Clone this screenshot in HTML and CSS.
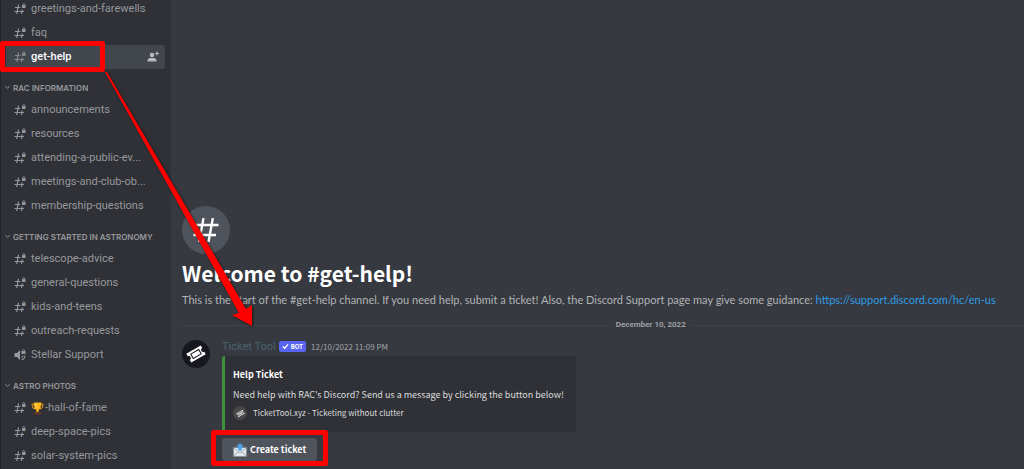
FILE: index.html
```html
<!DOCTYPE html>
<html lang="en">
<head>
<meta charset="utf-8">
<title>get-help</title>
<link rel="stylesheet" href="styles.css">
</head>
<body>
<svg class="defs" aria-hidden="true">
  <symbol id="hash" viewBox="0 0 24 24">
    <path d="M2 9h11M1 17h19M9 3 5.500 22M16.500 13 15 22" fill="none" stroke="currentColor" stroke-width="2.400"/>
    <rect x="16" y="4" width="7" height="6" rx="1" fill="currentColor"/><path d="M17.500 5V3a2 2 0 0 1 4 0v2" fill="none" stroke="currentColor" stroke-width="1.500"/>
  </symbol>
  <symbol id="chevron" viewBox="0 0 8 8"><path d="m1.500 2.500 2.500 2.500 2.500-2.500" fill="none" stroke="currentColor" stroke-width="1"/></symbol>
  <symbol id="ticket" viewBox="0 0 24 24">
    <g transform="rotate(-30 12 12)"><path fill="currentColor" d="M2 6h20v3.500a2.500 2.500 0 0 0 0 5V18H2v-3.500a2.500 2.500 0 0 0 0-5z"/><path d="M6.500 9h11v6h-11z" fill="none" stroke="#17171f" stroke-width="1.200"/></g>
  </symbol>
</svg>
<div class="app">
  <nav class="sidebar" aria-label="Channels">
    <ul class="channels">
      <li><a class="channel" href="#"><svg class="icon"><use href="#hash"/></svg><span class="name">greetings-and-farewells</span></a></li>
      <li><a class="channel" href="#"><svg class="icon"><use href="#hash"/></svg><span class="name">faq</span></a></li>
      <li><a class="channel selected" href="#" aria-current="page"><svg class="icon"><use href="#hash"/></svg><span class="name">get-help</span>
        <svg class="invite" viewBox="0 0 24 24" fill="currentColor"><circle cx="10" cy="8" r="4.500"/><path d="M1 21v-2c0-4 4-5 9-5s9 1 9 5v2zM19 1h2v3h3v2h-3v3h-2V6h-3V4h3z"/></svg></a></li>
    </ul>
    <h2 class="category"><svg class="chevron"><use href="#chevron"/></svg>RAC INFORMATION</h2>
    <ul class="channels">
      <li><a class="channel" href="#"><svg class="icon"><use href="#hash"/></svg><span class="name">announcements</span></a></li>
      <li><a class="channel" href="#"><svg class="icon"><use href="#hash"/></svg><span class="name">resources</span></a></li>
      <li><a class="channel" href="#"><svg class="icon"><use href="#hash"/></svg><span class="name">attending-a-public-ev...</span></a></li>
      <li><a class="channel" href="#"><svg class="icon"><use href="#hash"/></svg><span class="name">meetings-and-club-ob...</span></a></li>
      <li><a class="channel" href="#"><svg class="icon"><use href="#hash"/></svg><span class="name">membership-questions</span></a></li>
    </ul>
    <h2 class="category"><svg class="chevron"><use href="#chevron"/></svg>GETTING STARTED IN ASTRONOMY</h2>
    <ul class="channels">
      <li><a class="channel" href="#"><svg class="icon"><use href="#hash"/></svg><span class="name">telescope-advice</span></a></li>
      <li><a class="channel" href="#"><svg class="icon"><use href="#hash"/></svg><span class="name">general-questions</span></a></li>
      <li><a class="channel" href="#"><svg class="icon"><use href="#hash"/></svg><span class="name">kids-and-teens</span></a></li>
      <li><a class="channel" href="#"><svg class="icon"><use href="#hash"/></svg><span class="name">outreach-requests</span></a></li>
      <li><a class="channel" href="#"><svg class="icon" viewBox="0 0 24 24"><path fill="currentColor" d="M12 2v20l-6-6H1V8h5z"/><path d="M15 17a5 5 0 0 0 3-4M15 21.500a9 9 0 0 0 7-8.500" fill="none" stroke="currentColor" stroke-width="2.200"/><rect x="15" y="4" width="8" height="6" rx="1" fill="currentColor"/><path d="M17 5V3a2 2 0 0 1 4 0v2" fill="none" stroke="currentColor" stroke-width="1.500"/></svg><span class="name">Stellar Support</span></a></li>
    </ul>
    <h2 class="category"><svg class="chevron"><use href="#chevron"/></svg>ASTRO PHOTOS</h2>
    <ul class="channels">
      <li><a class="channel" href="#"><svg class="icon"><use href="#hash"/></svg><span class="name"><svg class="trophy" viewBox="0 0 24 24" role="img" aria-label="trophy"><path d="M6 4H2c0 5 2 8 6 9M18 4h4c0 5-2 8-6 9" fill="none" stroke="#e89b12" stroke-width="2"/><path d="M5 1h14c0 8-2 12-5 14v4h-4v-4C7 13 5 9 5 1z" fill="#ffb61c"/><path d="M8 3h2c0 5 0 7 1 9-2-1-3-5-3-9z" fill="#ffe08a"/><path d="M5 19h14v4H5z" fill="#6b3524"/></svg>-hall-of-fame</span></a></li>
      <li><a class="channel" href="#"><svg class="icon"><use href="#hash"/></svg><span class="name">deep-space-pics</span></a></li>
      <li><a class="channel" href="#"><svg class="icon"><use href="#hash"/></svg><span class="name">solar-system-pics</span></a></li>
    </ul>
  </nav>
  <main class="chat">
    <div class="hero"><svg viewBox="0 0 24 24"><path d="M4 8h18M2 16h18M10 2.500 6.500 21.500M17.500 2.500 14 21.500" fill="none" stroke="currentColor" stroke-width="1.900"/></svg></div>
    <h1 class="title">Welcome to #get-help!</h1>
    <p class="intro">This is the start of the #get-help channel. If you need help, submit a ticket! Also, the Discord Support page may give some guidance: <a href="https://support.discord.com/hc/en-us">https://support.discord.com/hc/en-us</a></p>
    <div class="divider"><span>December 10, 2022</span></div>
    <article class="message">
      <div class="avatar"><svg><use href="#ticket"/></svg></div>
      <div class="body">
        <header class="meta"><span class="author">Ticket Tool</span><span class="bot"><svg viewBox="0 0 8 8"><path d="m1 4 2 2 4-4.500" fill="none" stroke="currentColor" stroke-width="1.400"/></svg>BOT</span><time>12/10/2022 11:09 PM</time></header>
        <section class="embed">
          <h3>Help Ticket</h3>
          <p>Need help with RAC's Discord? Send us a message by clicking the button below!</p>
          <footer><span class="mini"><svg><use href="#ticket"/></svg></span>TicketTool.xyz - Ticketing without clutter</footer>
        </section>
        <button class="create" type="button"><svg viewBox="0 0 24 24"><path fill="#dce6ec" d="M1 8h22v15H1z"/><path d="m1 8 11 9L23 8M1 23l8-8M23 23l-8-8" fill="none" stroke="#9aabb6" stroke-width="1.500"/><path fill="#4ba3e8" d="M9 13V6H5l7-6 7 6h-4v7z"/></svg>Create ticket</button>
      </div>
    </article>
  </main>
</div>
<svg class="markup" width="350" height="469" viewBox="0 0 350 469" aria-hidden="true">
  <g fill="none" stroke="#fe0000" stroke-width="5" stroke-linejoin="round"><rect x="2.500" y="43.500" width="100" height="26"/><rect x="213.500" y="432.500" width="112" height="31"/></g>
  <path class="arrow" fill="#fe0000" d="M105 72 107 72 246 309 252 305V326L232 315 239 313z"/>
</svg>
</body>
</html>
```
FILE: styles.css
```css
* { box-sizing: border-box; }
body { margin: 0; background: #36393f; color: #dcddde; font: 9px/18px "Noto Sans CJK SC", "Noto Sans", sans-serif; overflow: hidden; }
h1, h2, h3, p, ul { margin: 0; padding: 0; }
ul { list-style: none; }
svg { display: block; flex: none; }
.defs { position: absolute; width: 0; height: 0; }
.app { display: flex; height: 100vh; overflow: hidden; }
.sidebar { flex: none; width: 171px; background: #2f3136; border-left: 1px solid #232428; padding: 0 6px 0 5px; margin-top: -3px; color: #96989d; }
.channel { display: flex; align-items: center; height: 24px; padding: 0 6px 0 8px; border-radius: 3px; color: inherit; font: 11px/18px Roboto, sans-serif; text-decoration: none; }
.icon { width: 12px; height: 12px; margin-right: 5px; }
.name { display: flex; align-items: center; white-space: nowrap; }
.selected { background: #42464d; }
.selected .name { color: #fff; font-weight: 500; }
.selected .icon { color: #85888d; }
.invite { width: 12px; height: 12px; margin-left: auto; color: #b9bbbe; }
.category { display: flex; align-items: center; height: 29px; padding-top: 8px; font: 600 8px/16px Inter, sans-serif; white-space: nowrap; }
.chevron { width: 7px; height: 7px; margin-left: -2px; margin-right: 2px; }
.trophy { width: 13px; height: 13px; margin-right: 1px; }
.chat { flex: 1; min-width: 0; display: flex; flex-direction: column; justify-content: flex-end; padding: 0 0 8px 11px; }
.hero { width: 48px; height: 48px; border-radius: 50%; background: #4f545c; color: #fff; display: grid; place-items: center; }
.hero svg { width: 30px; height: 30px; }
.title { margin-top: 5px; color: #fff; font-size: 21px; line-height: 28px; }
.intro { margin-top: 4px; color: #b1b3b7; font: 11px/18px Lato, sans-serif; white-space: nowrap; }
.intro a { color: #2e9ce6; text-decoration: none; }
.divider { display: flex; align-items: center; gap: 4px; margin-top: 7px; font: 600 8px/18px Roboto, sans-serif; color: #a3a6aa; }
.divider::before, .divider::after { content: ""; flex: 7; height: 1px; background: #3f4248; }
.divider::before { flex: 9; }
.message { display: flex; gap: 12px; margin-top: 5px; }
.avatar { flex: none; display: grid; place-items: center; width: 28px; height: 28px; margin-top: 1px; border-radius: 50%; background: #17171f; color: #fff; }
.avatar svg { width: 20px; height: 20px; }
.body { display: flex; flex-direction: column; align-items: flex-start; }
.meta { display: flex; align-items: center; height: 17px; padding-bottom: 2px; }
.author { color: #4b626f; font: 11px/15px Roboto, sans-serif; }
.bot { display: flex; align-items: center; gap: 2px; height: 11px; margin: 0 5px 0 3px; padding: 0 3px; border-radius: 2px; background: #5865f2; color: #fff; font: 700 6px/11px Inter, sans-serif; }
.bot svg { width: 7px; height: 7px; }
.meta time { font-size: 8px; line-height: 15px; color: #a3a6aa; }
.embed { padding: 10px 12px 10px 8px; border-left: 3px solid #3e913f; border-radius: 3px; background: #2f3136; }
.embed h3 { margin-bottom: 2px; color: #fff; font-size: 9px; font-weight: 700; }
.embed footer { display: flex; align-items: center; gap: 6px; font-size: 8px; }
.mini { display: grid; place-items: center; width: 14px; height: 14px; border-radius: 50%; background: #484848; color: #ddd; }
.mini svg { width: 9px; height: 9px; }
.create { display: flex; align-items: center; gap: 3px; height: 23px; margin-top: 6px; padding: 0 11px; border: 0; border-radius: 3px; background: #4f545c; color: #fff; font: 700 9px/18px "Noto Sans CJK SC", "Noto Sans", sans-serif; }
.create svg { width: 14px; height: 14px; }
.markup { position: absolute; left: 0; top: 0; }
.arrow { filter: drop-shadow(1px 1px 1px rgba(0, 0, 0, .6)); }
```
